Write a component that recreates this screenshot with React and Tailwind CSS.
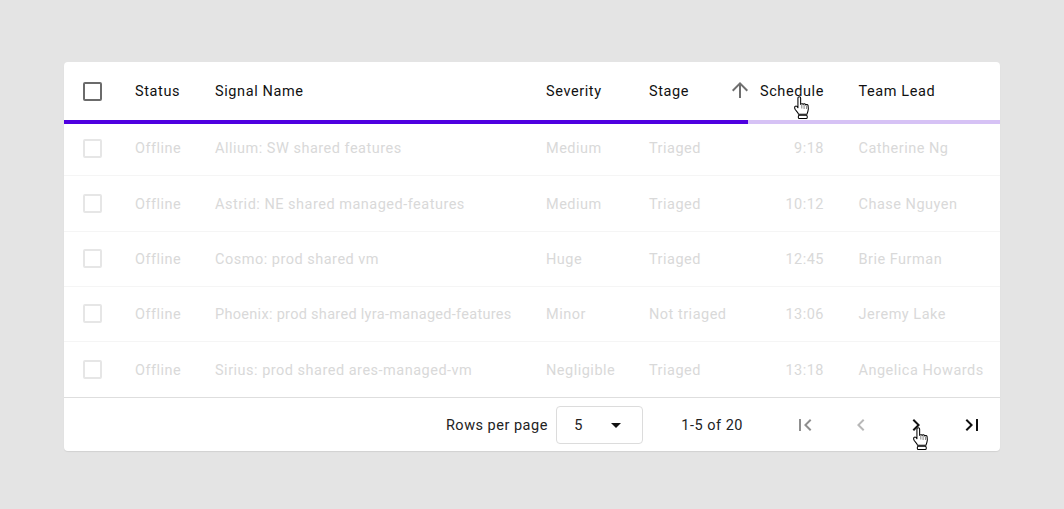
const rows = [
  ["Offline", "Allium: SW shared features", "Medium", "Triaged", "9:18", "Catherine Ng"],
  ["Offline", "Astrid: NE shared managed-features", "Medium", "Triaged", "10:12", "Chase Nguyen"],
  ["Offline", "Cosmo: prod shared vm", "Huge", "Triaged", "12:45", "Brie Furman"],
  ["Offline", "Phoenix: prod shared lyra-managed-features", "Minor", "Not triaged", "13:06", "Jeremy Lake"],
  ["Offline", "Sirius: prod shared ares-managed-vm", "Negligible", "Triaged", "13:18", "Angelica Howards"],
];

const columns = "grid grid-cols-[71px_80px_331px_103px_80px_95px_176px] items-center";

function Icon({ d, className }) {
  return (
    <svg viewBox="0 0 24 24" className={className} fill="currentColor">
      <path d={d} />
    </svg>
  );
}

function HandCursor({ className }) {
  return (
    <svg viewBox="0 0 15 22" className={className}>
      <path
        d="M3.6 2c0-1.600 2.600-1.600 2.600 0v6c.3-1.200 2.200-1.200 2.400.2.300-1 2.200-1 2.400.3.500-.8 2.200-.5 2.300.8.400 2 .3 4-.2 5.500l-.9 2.700H4.200c-.4-1.500-2-2.800-3.200-4.600C.2 11.300.3 10 1.200 9.700c.8-.3 1.700.3 2.400 1.500z"
        fill="#fff"
        stroke="#000"
        strokeWidth="1"
        strokeLinejoin="round"
      />
      <path d="M7.300 7v5M9.500 8v4.500M11.800 9v3.500" stroke="#8a8a8a" strokeWidth="1" fill="none" />
      <rect x="4" y="18.500" width="8.500" height="3" rx="1" fill="#fff" stroke="#000" strokeWidth="1" />
    </svg>
  );
}

function Checkbox({ dim }) {
  return (
    <div className="pl-[19px]">
      <div
        className={
          dim
            ? "w-[19px] h-[19px] rounded-[2px] border-2 border-[#e6e6e6]"
            : "w-[19px] h-[19px] rounded-[2px] border-2 border-[#6b6b6b]"
        }
      />
    </div>
  );
}

export default function App() {
  return (
    <div
      className="w-[1064px] h-[509px] bg-[#e4e4e4] pt-[62px] pl-[64px] overflow-hidden text-[14.5px] tracking-[0.5px]"
      style={{ fontFamily: "Roboto, sans-serif" }}
    >
      <div className="relative w-[936px] h-[389px] bg-white rounded-[4px] shadow-[0_1px_1px_rgba(0,0,0,0.08)] flex flex-col">
        <div className={`${columns} h-[58px] text-[#111] shrink-0 tracking-[0.6px]`}>
          <Checkbox />
          <div className="pt-[1px]">Status</div>
          <div className="pt-[1px]">Signal Name</div>
          <div className="pt-[1px]">Severity</div>
          <div className="pt-[1px]">Stage</div>
          <div className="relative pt-[1px] text-right">
            Schedule
            <Icon
              d="M4 12l1.41 1.41L11 7.83V20h2V7.83l5.58 5.59L20 12l-8-8-8 8z"
              className="absolute left-[-1px] top-[-2px] w-6 h-6 text-[#6f6f6f]"
            />
            <HandCursor className="absolute left-[65px] top-[16px] w-[16px] h-[23px]" />
          </div>
          <div className="pt-[1px] pl-[34.500px]">Team Lead</div>
        </div>

        <div className="pt-[1px] h-[277px] shrink-0">
          {rows.map((row, i) => (
            <div
              key={row[1]}
              className={
                i < rows.length - 1
                  ? `${columns} h-[55.25px] border-b border-[#f5f5f5] text-[#d9d9d9]`
                  : `${columns} h-[55px] text-[#d9d9d9]`
              }
            >
              <Checkbox dim />
              <div className="pt-[2px]">{row[0]}</div>
              <div className={i === 3 ? "pt-[2px] tracking-[0.3px]" : "pt-[2px]"}>{row[1]}</div>
              <div className="pt-[2px]">{row[2]}</div>
              <div className="pt-[2px]">{row[3]}</div>
              <div className="pt-[2px] text-right">{row[4]}</div>
              <div className="pt-[2px] pl-[34.500px] whitespace-nowrap">{row[5]}</div>
            </div>
          ))}
        </div>

        <div className="absolute left-0 right-0 top-[58px] h-[4px] flex">
          <div className="w-[684px] bg-[#4f00e0]" />
          <div className="flex-1 bg-[#d6c2f5]" />
        </div>

        <div className="flex-1 border-t border-[#dedede] flex items-center justify-end pr-[0.5px] text-[#222]">
          <span className="pt-[3px]">Rows per page</span>
          <div className="ml-[8.500px] w-[87px] h-[38px] border border-[#dcdcdc] rounded-[4px] flex items-center justify-between pl-[17px] pr-[14px]">
            <span className="pt-[3px]">5</span>
            <Icon d="M7 10l5 5 5-5z" className="w-6 h-6 text-[#111]" />
          </div>
          <span className="ml-[38px] mr-[35px] pt-[3px]">1-5 of 20</span>
          <div className="flex">
            <button className="w-[55.400px] flex justify-center text-[#8f8f8f]">
              <Icon d="M18.41 16.59L13.82 12l4.59-4.59L17 6l-6 6 6 6zM6 6h2v12H6z" className="w-6 h-6 -ml-[2px]" />
            </button>
            <button className="w-[55.400px] flex justify-center text-[#b8b8b8]">
              <Icon d="M15.41 7.41L14 6l-6 6 6 6 1.41-1.41L10.83 12z" className="w-6 h-6" />
            </button>
            <button className="relative w-[55.400px] flex justify-center text-[#111]">
              <Icon d="M10 6L8.59 7.41 13.17 12l-4.58 4.59L10 18l6-6z" className="w-6 h-6" />
              <HandCursor className="absolute left-[24px] top-[14px] w-[16px] h-[23px]" />
            </button>
            <button className="w-[55.400px] flex justify-center text-[#111]">
              <Icon d="M5.59 7.41L10.18 12l-4.59 4.59L7 18l6-6-6-6zM16 6h2v12h-2z" className="w-6 h-6" />
            </button>
          </div>
        </div>
      </div>
    </div>
  );
}
